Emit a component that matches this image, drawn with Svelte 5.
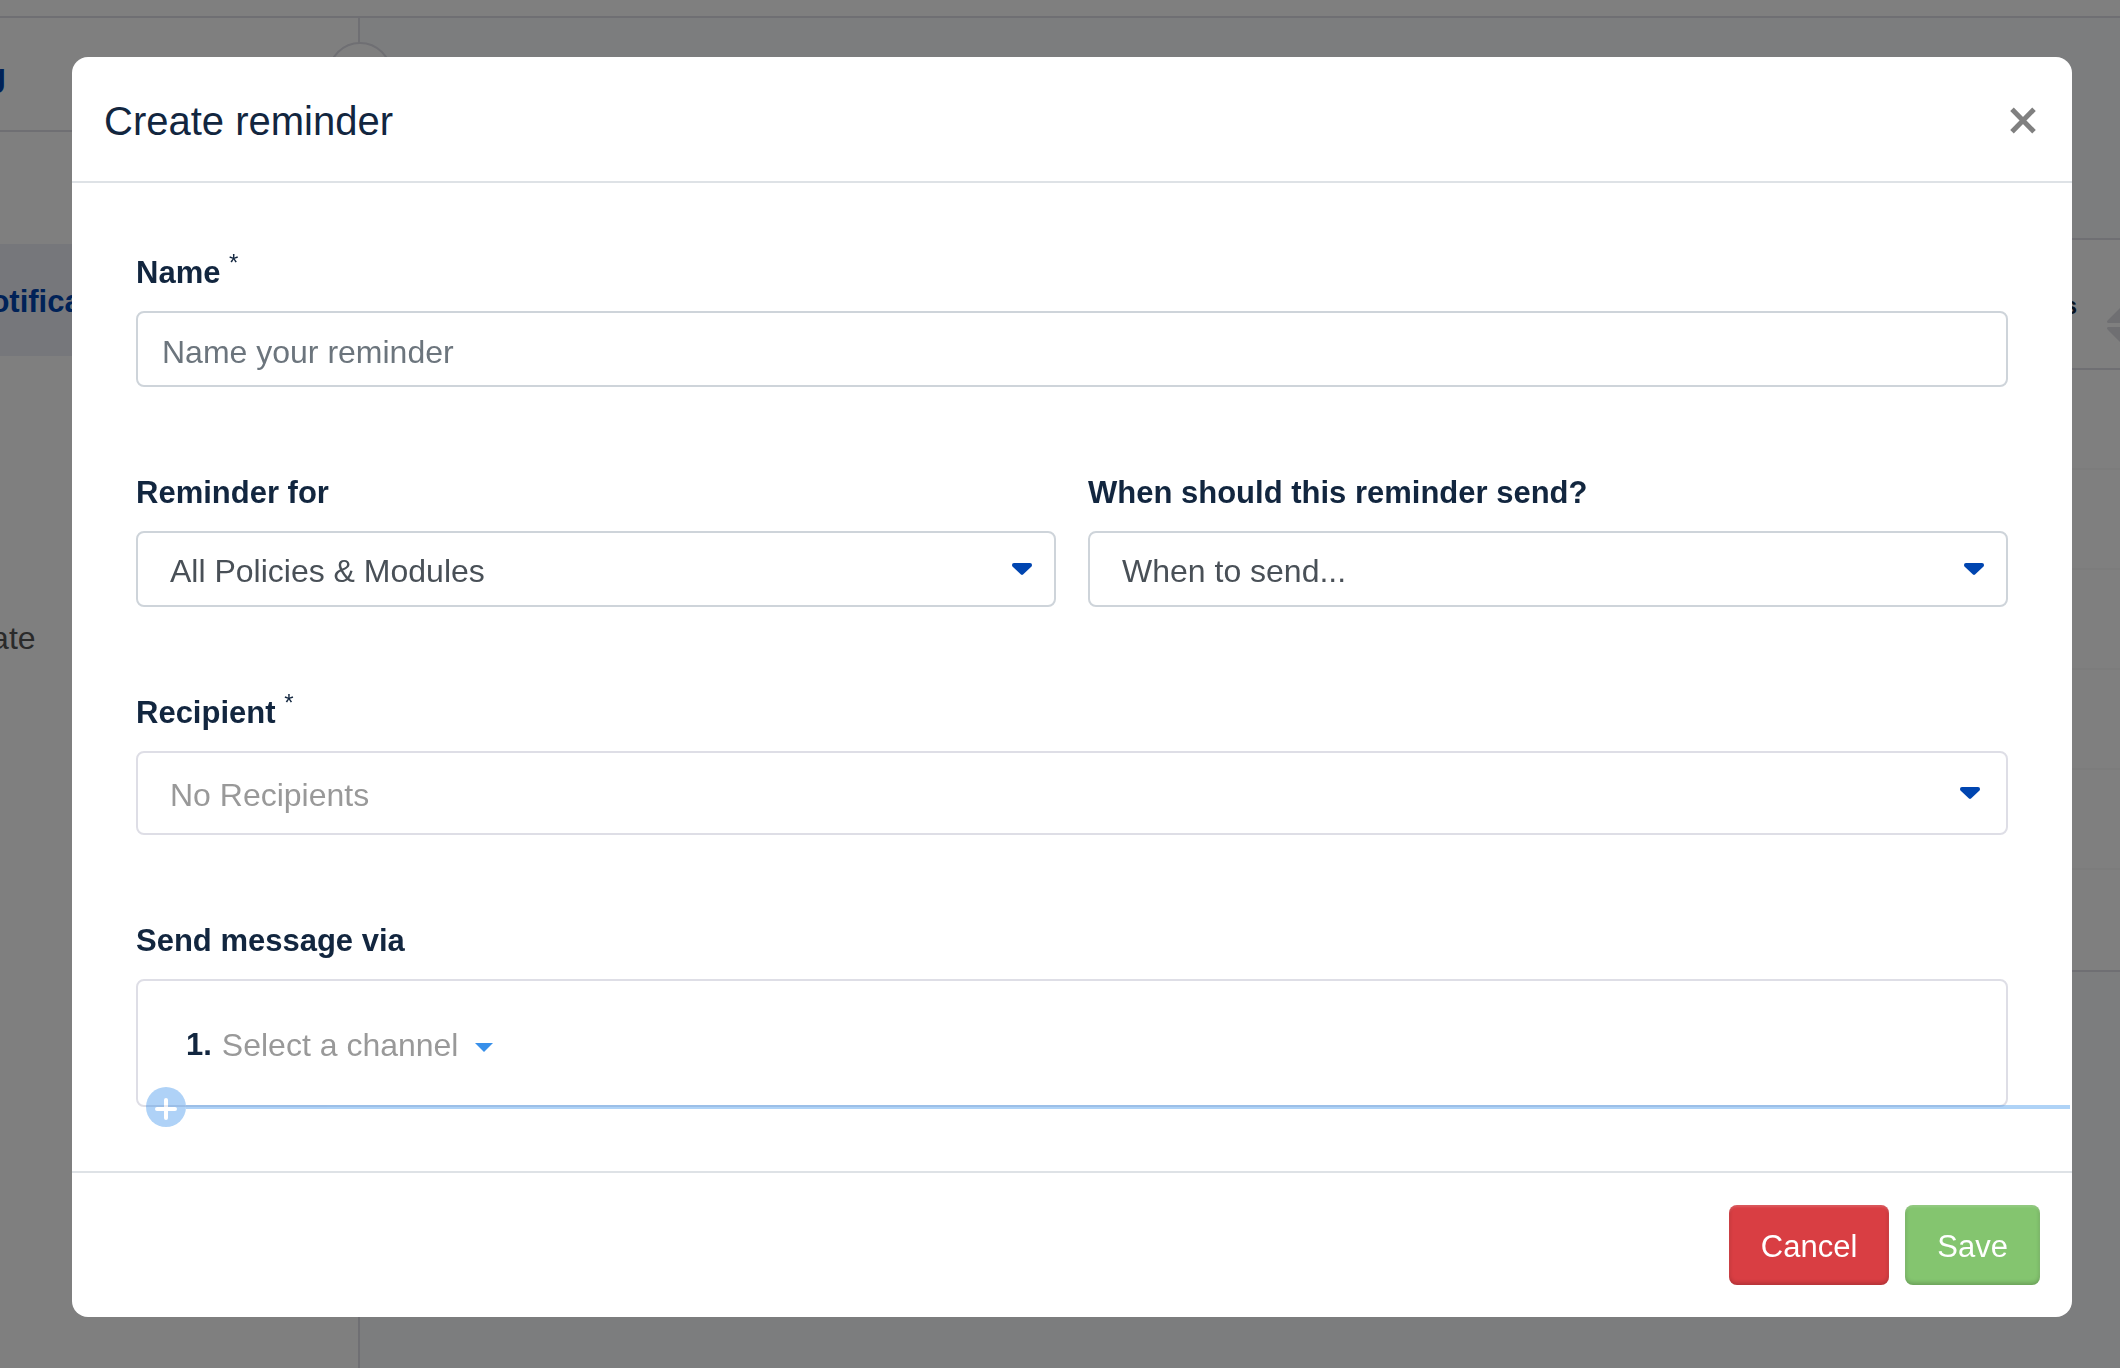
<script>
  let name = $state('')
  let reminderFor = $state('all')
  let sendWhen = $state('')
  let recipient = $state('')
  let channel = $state('')

  const rows = [1, 2, 3, 4, 5, 6]
</script>

{#snippet caret()}
  <svg class="caret" viewBox="0 0 20 12" width="20" height="12" aria-hidden="true">
    <path d="M2 0h16q2 0 2 2 0 1-.7 1.7L11 11.5q-1 .9-2 0L.7 3.7Q0 3 0 2 0 0 2 0z" fill="#0045b0" />
  </svg>
{/snippet}

<div class="page">
  <div class="topbar"></div>
  <div class="main">
    <aside class="sidebar">
      <span class="toggle"></span>
      <div class="brand">ng</div>
      <nav>
        <a class="active" href="#notifications">Notifications</a>
        <a href="#date">Date</a>
      </nav>
    </aside>
    <div class="content">
      <table>
        <thead>
          <tr>
            <th>
              <div class="sort">
                <span>s</span>
                <svg viewBox="0 0 13 34" width="13" height="34" aria-hidden="true">
                  <path d="M1 15q-2-1 0-3L13 0v15zM1 19q-2 1 0 3l12 12V19z" fill="#dedee4" />
                </svg>
              </div>
            </th>
          </tr>
        </thead>
        <tbody>
          {#each rows as row (row)}
            <tr><td></td></tr>
          {/each}
        </tbody>
      </table>
    </div>
  </div>
</div>

<div class="backdrop">
  <div class="modal" role="dialog" aria-modal="true" aria-labelledby="modal-title">
    <header>
      <h1 id="modal-title">Create reminder</h1>
      <button class="close" type="button" aria-label="Close">
        <svg viewBox="0 0 26 27" width="26" height="27"><path d="M2 2.3l22 22.4M24 2.3L2 24.7" stroke="#808080" stroke-width="5" fill="none" /></svg>
      </button>
    </header>

    <form>
      <div class="field">
        <label for="name">Name <span class="req">*</span></label>
        <input id="name" type="text" placeholder="Name your reminder" bind:value={name} />
      </div>

      <div class="columns">
        <div class="field">
          <label for="reminder-for">Reminder for</label>
          <div class="select">
            <select id="reminder-for" bind:value={reminderFor}>
              <option value="all">All Policies &amp; Modules</option>
            </select>
            {@render caret()}
          </div>
        </div>
        <div class="field">
          <label for="send-when">When should this reminder send?</label>
          <div class="select">
            <select id="send-when" bind:value={sendWhen}>
              <option value="">When to send...</option>
            </select>
            {@render caret()}
          </div>
        </div>
      </div>

      <div class="field">
        <label for="recipient">Recipient <span class="req">*</span></label>
        <div class="select tall">
          <select id="recipient" bind:value={recipient}>
            <option value="">No Recipients</option>
          </select>
          {@render caret()}
        </div>
      </div>

      <div class="field">
        <label for="channel">Send message via</label>
        <div class="channels">
          <span class="number">1.</span>
          <select id="channel" bind:value={channel}>
            <option value="">Select a channel</option>
          </select>
          <svg class="small-caret" viewBox="0 0 18 9" width="18" height="9" aria-hidden="true"><path d="M0 0h18L9 9z" fill="#3890ea" /></svg>
          <button class="add" type="button" aria-label="Add channel">
            <svg viewBox="0 0 40 40" width="40" height="40">
              <circle cx="20" cy="20" r="20" fill="#3890ea" />
              <path d="M20 13v18M11 22h18" stroke="#fff" stroke-width="4" stroke-linecap="round" />
            </svg>
          </button>
        </div>
      </div>
    </form>

    <footer>
      <button class="btn cancel" type="button">Cancel</button>
      <button class="btn save" type="button">Save</button>
    </footer>
  </div>
</div>

<style>
  :global(body) {
    margin: 0;
    overflow: hidden;
  }
  .page, .backdrop {
    font-family: "Liberation Sans", Arial, sans-serif;
    font-size: 32px;
    color: #12263f;
    box-sizing: border-box;
  }
  .page *, .backdrop * { box-sizing: border-box; }

  /* page behind the dialog */
  .page {
    display: flex;
    flex-direction: column;
    height: 100vh;
    background: #fff;
    overflow: hidden;
  }
  .topbar {
    height: 18px;
    flex: none;
    border-bottom: 2px solid #dedee6;
  }
  .main {
    display: flex;
    flex: 1;
  }
  .sidebar {
    position: relative;
    width: 360px;
    flex: none;
    border-right: 2px solid #dedee6;
  }
  .toggle {
    position: absolute;
    top: 24px;
    right: -34px;
    width: 64px;
    height: 64px;
    border: 2px solid #dedee6;
    border-radius: 50%;
    background: #fff;
  }
  .brand, nav a {
    display: flex;
    align-items: center;
    padding-top: 4px;
    text-indent: -32px;
    white-space: nowrap;
  }
  .brand {
    height: 114px;
    border-bottom: 2px solid #dedee6;
    font-size: 31px;
    font-weight: 700;
    color: #0045b0;
  }
  nav {
    display: flex;
    flex-direction: column;
    gap: 224px;
    padding-top: 112px;
  }
  nav a {
    height: 112px;
    color: #555;
    text-decoration: none;
  }
  nav a.active {
    background: #eceef6;
    font-size: 31px;
    font-weight: 700;
    color: #0045b0;
  }
  .content {
    flex: 1;
    padding-top: 220px;
    background: #f8fafd;
  }
  table {
    width: 100%;
    border-spacing: 0;
    background: #fff;
    border-top: 2px solid #dedee6;
    border-bottom: 2px solid #dedee6;
  }
  th {
    height: 130px;
    padding: 52px 0 0;
    border-bottom: 2px solid #dedee6;
    vertical-align: top;
  }
  .sort {
    display: flex;
    justify-content: flex-end;
    gap: 30px;
    font-size: 24px;
    line-height: 28px;
  }
  .sort svg { margin-top: 16px; }
  td {
    height: 100px;
    padding: 0;
    border-bottom: 2px solid #f8f8f8;
  }
  tr:last-child td { border-bottom: 0; }

  .backdrop {
    position: fixed;
    inset: 0;
    padding: 57px 48px 48px 72px;
    background: rgba(0, 0, 0, 0.5);
  }
  .modal {
    display: flex;
    flex-direction: column;
    background: #fff;
    border-radius: 16px;
  }
  header {
    display: flex;
    align-items: center;
    justify-content: space-between;
    padding: 33px 32px 31px;
    border-bottom: 2px solid #dee2e6;
  }
  h1 {
    margin: 0;
    padding-top: 2px;
    font-size: 40px;
    font-weight: 400;
    line-height: 58px;
  }
  button, input, select {
    font: inherit;
    cursor: pointer;
  }
  .close {
    display: flex;
    padding: 4px;
    border: 0;
    background: transparent;
  }

  form {
    display: flex;
    flex-direction: column;
    gap: 80px;
    padding: 64px;
  }
  .columns {
    display: grid;
    grid-template-columns: 1fr 1fr;
    gap: 32px;
  }
  .field {
    display: flex;
    flex-direction: column;
    gap: 12px;
  }
  label {
    font-size: 31px;
    font-weight: 700;
    line-height: 52px;
  }
  .req {
    font-size: 24px;
    font-weight: 400;
    line-height: 0;
    vertical-align: 12px;
  }
  input {
    width: 100%;
    height: 76px;
    padding: 6px 24px 0;
    border: 2px solid #ced4da;
    border-radius: 8px;
    background: #fff;
    color: #495057;
    cursor: text;
  }
  input::placeholder { color: #6c757d; opacity: 1; }
  select {
    appearance: none;
    border: 0;
    background: transparent;
    color: #495057;
  }
  /* select and caret share one grid cell */
  .select {
    display: grid;
    align-items: center;
  }
  .select select, .caret { grid-area: 1 / 1; }
  .select select {
    width: 100%;
    height: 76px;
    padding: 4px 64px 0 32px;
    border: 2px solid #ced4da;
    border-radius: 8px;
  }
  .caret {
    justify-self: end;
    margin-right: 24px;
    pointer-events: none;
  }
  .tall select {
    height: 84px;
    border-color: #dedee6;
    color: #999;
  }
  .tall .caret { margin-right: 28px; }

  .channels {
    position: relative;
    display: flex;
    align-items: center;
    height: 128px;
    padding: 4px 48px 0;
    border: 2px solid #dedee6;
    border-radius: 8px;
  }
  .number {
    font-size: 31px;
    font-weight: 700;
  }
  .channels select {
    margin-left: 10px;
    padding: 0;
    color: #999;
  }
  .small-caret {
    margin-top: 4px;
    margin-left: 16px;
  }
  .add {
    position: absolute;
    left: 8px;
    right: -64px;
    bottom: -22px;
    display: flex;
    align-items: center;
    padding: 0;
    border: 0;
    background: transparent;
    opacity: 0.4;
  }
  .add svg { flex: none; }
  .add::after {
    content: "";
    flex: 1;
    height: 4px;
    background: #3890ea;
  }

  footer {
    display: flex;
    justify-content: flex-end;
    gap: 16px;
    padding: 32px;
    border-top: 2px solid #dee2e6;
  }
  .btn {
    height: 80px;
    padding: 4px 32px 0;
    border: 0;
    border-radius: 8px;
    font-size: 31px;
    color: #fff;
    box-shadow: inset 0 2px 2px rgba(255, 255, 255, 0.15), inset 0 -2px 4px rgba(0, 0, 0, 0.2);
  }
  .cancel { background: #d93e43; }
  .save { background: #84c56f; }
</style>
